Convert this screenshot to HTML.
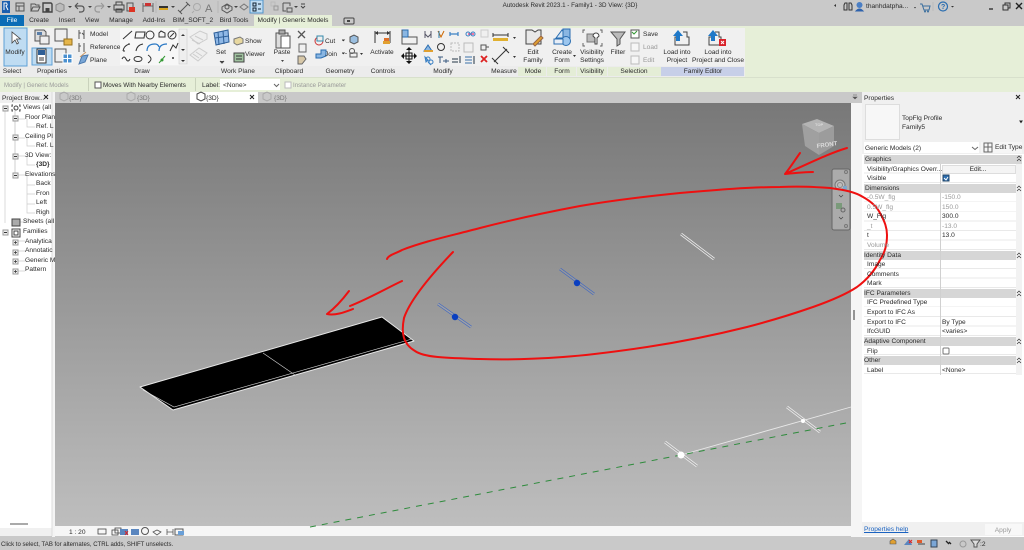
<!DOCTYPE html>
<html><head><meta charset="utf-8"><style>
html,body{margin:0;padding:0}
body{position:relative;width:1024px;height:548px;overflow:hidden;background:#c9c9c9;font-family:"Liberation Sans",sans-serif;font-size:6.6px;color:#2a2a2a}
.t{position:absolute;white-space:nowrap;line-height:10px;height:10px}
.c{transform:translateX(-50%)}
.b{position:absolute}
.g{color:#999}
.w{position:absolute;left:0;top:1px;width:0;height:0}
</style></head><body>
<div class="b" style="left:0;top:26px;width:1024px;height:52px;background:#f0f0f0"></div>
<div class="b" style="left:745px;top:26px;width:279px;height:51px;background:#e6efd8"></div>
<div class="b" style="left:0;top:26px;width:745px;height:2px;background:#e6efd8"></div>
<div class="b" style="left:0;top:66px;width:745px;height:11px;background:#ececec"></div>
<div class="b" style="left:518px;top:67px;width:28px;height:9px;background:#e4edd6"></div>
<div class="b" style="left:547px;top:67px;width:29px;height:9px;background:#e4edd6"></div>
<div class="b" style="left:577px;top:67px;width:30px;height:9px;background:#e4edd6"></div>
<div class="b" style="left:608px;top:67px;width:53px;height:9px;background:#e4edd6"></div>
<div class="b" style="left:661px;top:67px;width:83px;height:9px;background:#c7cfe8"></div>
<div class="b" style="left:0;top:15px;width:24px;height:11px;background:#0b6db6"></div>
<div class="b" style="left:254px;top:15px;width:78px;height:11px;background:#e6efd8"></div>
<div class="b" style="left:0;top:78px;width:1024px;height:14px;background:#e6efd8"></div>
<div class="b" style="left:0;top:77px;width:1024px;height:1px;background:#d8e0cc"></div>
<div class="b" style="left:220px;top:79px;width:60px;height:11px;background:#fff"></div>
<div class="b" style="left:88px;top:78px;width:1px;height:13px;background:#c9d2bc"></div>
<div class="b" style="left:195px;top:78px;width:1px;height:13px;background:#c9d2bc"></div>

<div class="b" style="left:190px;top:92px;width:68px;height:11px;background:#fff"></div>
<div class="b" style="left:0;top:92px;width:52px;height:444px;background:#fff"></div>
<div class="b" style="left:0;top:92px;width:52px;height:11px;background:#f0f0f0"></div>
<div class="b" style="left:0;top:528px;width:52px;height:8px;background:#f0f0f0"></div>
<div class="b" style="left:52px;top:92px;width:3px;height:445px;background:#f4f4f4"></div>
<div class="b" style="left:55px;top:103px;width:796px;height:423px;background:linear-gradient(#787878,#bebebe)"></div>
<div class="b" style="left:851px;top:103px;width:11px;height:434px;background:#f5f5f5"></div>
<div class="b" style="left:55px;top:526px;width:796px;height:10px;background:#f6f6f6"></div>
<div class="b" style="left:862px;top:92px;width:162px;height:445px;background:#fff"></div>
<div class="b" style="left:862px;top:92px;width:162px;height:11px;background:#f0f0f0"></div>
<div class="b" style="left:862px;top:103px;width:162px;height:51px;background:#f0f0f0"></div>
<div class="b" style="left:865px;top:104px;width:35px;height:36px;background:#f7f7f7;border:1px solid #ddd;box-sizing:border-box"></div>
<div class="b" style="left:864px;top:142px;width:115px;height:11px;background:#fff"></div>
<div class="b" style="left:981px;top:142px;width:41px;height:11px;background:#f6f6f6"></div>
<div class="b" style="left:862px;top:522px;width:162px;height:14px;background:#f0f0f0"></div>
<div class="b" style="left:985px;top:524px;width:37px;height:11px;background:#f8f8f8"></div>

<div class="b" style="left:864px;top:164px;width:152px;height:211px;background:repeating-linear-gradient(#fff 0,#fff 8.6px,#e9e9e9 8.6px,#e9e9e9 9.55px)"></div>
<div class="b" style="left:864px;top:155px;width:158px;height:9px;background:#d6d6d6"></div>
<div class="b" style="left:864px;top:184px;width:158px;height:9px;background:#d6d6d6"></div>
<div class="b" style="left:864px;top:251px;width:158px;height:9px;background:#d6d6d6"></div>
<div class="b" style="left:864px;top:289px;width:158px;height:9px;background:#d6d6d6"></div>
<div class="b" style="left:864px;top:337px;width:158px;height:9px;background:#d6d6d6"></div>
<div class="b" style="left:864px;top:356px;width:158px;height:9px;background:#d6d6d6"></div>
<div class="b" style="left:940px;top:164px;width:1px;height:211px;background:#d0d0d0"></div>
<div class="b" style="left:942px;top:165px;width:74px;height:9px;background:#f4f4f4;border:1px solid #ddd;box-sizing:border-box"></div>
<div class="b" style="left:1016px;top:164px;width:6px;height:211px;background:#f2f2f2"></div>

<svg class="b" style="left:0;top:0" width="1024" height="548" viewBox="0 0 1024 548" fill="none">
<!-- QAT -->
<rect x="2" y="1" width="8" height="12" fill="#1c5fae"/><path d="M4 10V3h2.500q1.500 2-.5 3l2 4" stroke="#fff"/>
<rect x="16" y="3" width="8" height="8" stroke="#555"/><path d="M16 6h8M19 6v5" stroke="#555"/>
<path d="M31 11V4h4l1 1h3v2M31 11l2-4h7l-2 4z" stroke="#555"/>
<path d="M43 3h8l1 1v8H43z" stroke="#444" stroke-width="1.400"/><rect x="45.500" y="8" width="4" height="3.500" fill="#444"/>
<path d="M56 5l4-2 4 2v5l-4 2-4-2z" fill="#bbb" stroke="#888"/>
<path d="M75 6h6q3 0 3 3t-3 3h-2M75 6l3-3M75 6l3 3" stroke="#555" stroke-width="1.200"/>
<path d="M104 6h-6q-3 0-3 3t3 3h2M104 6l-3-3M104 6l-3 3" stroke="#999" stroke-width="1.200"/>
<path d="M116 5V2h6v3M114 5h10v5h-10zM116 9h6v3h-6z" stroke="#444"/>
<rect x="127" y="3" width="6" height="8" stroke="#555"/><rect x="129" y="7" width="6" height="5" fill="#d32"/>
<path d="M143 3v9M153 3v9M143 6h10" stroke="#666"/><rect x="145" y="3" width="6" height="3" fill="#c33"/>
<rect x="159" y="6" width="9" height="2" fill="#333"/><rect x="159" y="8" width="9" height="2" fill="#d9a520"/>
<path d="M180 12l8-8M178 10l4 4M186 2l4 4" stroke="#555"/>
<circle cx="197" cy="7" r="3.500" stroke="#aaa"/><path d="M194 11l-2 2" stroke="#aaa"/>
<text x="205" y="12" font-size="11" fill="#777" font-family="Liberation Sans">A</text>
<path d="M222 7l5-3 5 3v3l-5 3-5-3z" stroke="#555"/><circle cx="227" cy="7" r="2" stroke="#555"/>
<path d="M240 7l4-3 4 3-4 3z" stroke="#777"/>
<rect x="250" y="0" width="13" height="13" fill="#bfdcf2" stroke="#4f93c9"/><path d="M253 3h3v3h-3zM253 8h3v3h-3zM258 4h3M258 9h3" stroke="#123"/>
<rect x="271" y="2" width="4" height="4" stroke="#bbb"/><rect x="274" y="6" width="4" height="4" stroke="#999"/>
<path d="M283 3h7v3M283 3v8h3M287 8h5v4h-5z" stroke="#555"/>
<path d="M156 1v12M218 1v12" stroke="#aaa" opacity=".6"/>
<path d="M68 6l2 2 2-2M88 6l2 2 2-2M107 6l2 2 2-2M171 6l2 2 2-2M234 6l2 2 2-2M294 6l2 2 2-2" fill="#444"/>
<path d="M301 4h4M301 6l2 2 2-2" stroke="#444"/>
<rect x="344" y="18" width="10" height="6" rx="1" stroke="#444"/><rect x="347" y="20" width="3" height="2" fill="#444"/>
<!-- right title icons -->
<path d="M836 7l-2-1.500 2-1.500z" fill="#333"/>
<path d="M844 10V5l1-2h2v7zM849 10V3h2l1 2v5z" stroke="#333"/>
<circle cx="859.500" cy="5" r="3" fill="#4a7ec4"/><path d="M856 11q3.500-4 7 0z" fill="#2e62ad" stroke="#2e62ad"/>
<path d="M914 7l2 0-1 1.500z" fill="#333"/>
<path d="M920 4h2l2 6h5l1-4h-7" stroke="#3a6e9e"/><circle cx="925" cy="11.500" r="1" fill="#3a6e9e"/><circle cx="928" cy="11.500" r="1" fill="#3a6e9e"/>
<path d="M933 2v9" stroke="#bbb"/>
<circle cx="943" cy="6.500" r="4.500" stroke="#2a6db0" stroke-width="1.200"/><text x="941" y="9" font-size="7" font-weight="bold" fill="#2a6db0" font-family="Liberation Sans">?</text>
<path d="M951 6l3 0-1.500 1.500z" fill="#333"/>
<path d="M989 9h4" stroke="#333" stroke-width="1.400"/>
<path d="M1003 5h5v5h-5zM1005 5V3h5v5h-2" stroke="#333"/>
<path d="M1016 3l6 6M1022 3l-6 6" stroke="#222" stroke-width="1.400"/>
<!-- Ribbon: Modify button -->
<rect x="4" y="28" width="23" height="38" fill="#bfdcf2" stroke="#5ea0d6"/>
<path d="M12 32v11l3-3 2 4 1.500-1-2-4h4z" fill="#fff" stroke="#444" stroke-width=".8"/>
<!-- Properties -->
<path d="M35 30h9l2 2v4h-6v5h-5z" fill="#ddd" stroke="#555"/><rect x="40" y="36" width="9" height="8" fill="#eee" stroke="#555"/><path d="M37 32h5v3h-5z" fill="#5a7ea8"/>
<rect x="55" y="29" width="12" height="12" fill="#eee" stroke="#555"/><rect x="64" y="39" width="8" height="6" fill="#e6b64a" stroke="#96701e"/>
<rect x="32" y="48" width="20" height="17" fill="#bfdcf2" stroke="#5ea0d6"/><rect x="37" y="49" width="9" height="14" fill="#fff" stroke="#333"/><rect x="38" y="50" width="7" height="5" fill="#2e5f96"/><path d="M39 58h5M39 60h5" stroke="#333"/>
<rect x="55" y="49" width="11" height="13" fill="#eee" stroke="#555"/><rect x="63" y="54" width="9" height="9" fill="#4a90d0" stroke="#fff"/><path d="M67.500 54v9M63 58.500h9" stroke="#fff"/>
<!-- Model/Ref/Plane -->
<path d="M79 30v9M84 30v9M79 33h2M84 35l-2-2" stroke="#555"/>
<path d="M79 43v9M84 43v9M79 46h2" stroke="#555"/>
<path d="M79 64l3-8 6-1-3 7z" fill="#7aa6d6" stroke="#4a78ad"/><path d="M80 57l6-5" stroke="#c96"/>
<!-- Draw gallery -->
<rect x="120" y="28" width="67" height="37" fill="#f7f7f7"/><rect x="179" y="29" width="8" height="35" fill="#eee" stroke="#ccc" stroke-width=".6"/>
<path d="M123 39l9-8" stroke="#333"/><path d="M136 32h9l-1 6h-9z" stroke="#333"/>
<circle cx="150" cy="35" r="4" stroke="#333"/><path d="M161 31l4 2v4h-6v-4z" stroke="#333"/><circle cx="172" cy="35" r="4" stroke="#333"/><path d="M170 37l4-4" stroke="#333"/>
<path d="M123 51q1-6 7-7M125 51h-2M130 44h-2" stroke="#333"/>
<path d="M136 51q1-6 7-7" stroke="#333"/><path d="M147 51q0-7 8-7 3 0 4 3" stroke="#2a78c4" stroke-width="1.200"/><path d="M159 51q0-7 8-7" stroke="#2a78c4" stroke-width="1.200"/><path d="M170 51l3-6 3 3 2-5" stroke="#333"/>
<path d="M122 59q2-4 4 0t4 0" stroke="#333"/><ellipse cx="138" cy="59" rx="4" ry="2.500" stroke="#333"/><path d="M148 55q6 4 0 8" stroke="#333"/><path d="M159 63l6-7" stroke="#393"/><circle cx="162" cy="60" r="1.500" fill="#393"/><circle cx="173" cy="58" r="1" fill="#333"/>
<path d="M181 36l2-2 2 2M181 49l2 2 2-2M181 60l2 2 2-2" fill="#333"/>
<path d="M190 37l10-6 7 3v5l-9 5z" fill="#eee" stroke="#ccc"/><path d="M192 40l8 4M195 36l8 4" stroke="#ccc"/>
<path d="M190 55l9-7 8 5-9 8z" fill="#eee" stroke="#ccc"/><path d="M193 54l6 4M196 52l6 4" stroke="#ccc"/>
<!-- Work plane -->
<path d="M214 33l14-3 1 12-13 3z" fill="#8fb8e6" stroke="#2d5f99"/><path d="M218 32l1 13M223 31l1 13M215 38l14-2" stroke="#2d5f99"/>
<path d="M234 39l6-2 3 2v4l-6 2-3-2z" fill="#e8d8a0" stroke="#777"/><path d="M234 53h10v9h-10z" fill="#9fc29f" stroke="#444"/><path d="M236 56h6M236 59h6" stroke="#333"/>
<path d="M220 61l2 2 2-2" fill="#444" stroke="#444"/>
<!-- Clipboard -->
<path d="M276 33h12v15h-12z" fill="#ddd" stroke="#555"/><rect x="279" y="30" width="6" height="4" fill="#aaa" stroke="#555"/><rect x="281" y="36" width="9" height="12" fill="#fff" stroke="#555"/>
<path d="M298 31l7 7M305 31l-7 7" stroke="#555" stroke-width="1.300"/><rect x="299" y="44" width="7" height="8" stroke="#666"/><path d="M298 56l6 0 2 3-4 5h-4z" fill="#d8c8a8" stroke="#666"/>
<path d="M281 60l3 0-1.500 2z" fill="#444"/>
<!-- Geometry -->
<circle cx="319" cy="41" r="4" stroke="#c33"/><rect x="317" y="36" width="6" height="5" fill="#eee" stroke="#38a"/>
<path d="M316 54h5v-4h5v6l-5 2h-5z" fill="#8ab6e2" stroke="#2a6db0"/>
<path d="M342 40l2 0-1 1M342 53l2 0-1 1" stroke="#333"/>
<path d="M350 37l4-2 4 2v5l-4 2-4-2z" fill="#9bbfe0" stroke="#555"/>
<circle cx="352" cy="51" r="2.500" stroke="#555"/><rect x="350" y="53" width="7" height="4" stroke="#555"/>
<path d="M360 53l3 0-1.500 2zM345 53l2 0-1 1z" fill="#333"/>
<!-- Controls -->
<path d="M375 31v12M390 31v12M375 33h15" stroke="#333"/><path d="M375 33l3-2v4zM390 33l-3-2v4z" fill="#333"/>
<rect x="384" y="38" width="5" height="4" fill="#e0702a"/><rect x="383" y="41" width="7" height="3" fill="#e0a030"/>
<!-- Modify -->
<rect x="402" y="30" width="6" height="7" fill="#8ab6e2" stroke="#2a6db0"/><path d="M402 30v14h15v-7h-9" stroke="#555"/>
<path d="M409 47l-3 3h6zM409 64l-3-3h6zM401 56l3-3v6zM417 56l-3-3v6z" fill="#111"/><path d="M406 53h6v6h-6z" stroke="#111"/><path d="M404 56h11M409 50v11" stroke="#111"/>
<path d="M425 31v7M431 31v7M425 34l3 3 3-3" stroke="#556"/><path d="M438 31l3 6 3-6" stroke="#c60"/><path d="M439 31v7" stroke="#27a"/>
<path d="M450 34h8M450 32v4M458 32v4" stroke="#3a80c4" stroke-width="1.200"/><path d="M468 34h6" stroke="#e05"/><circle cx="468" cy="34" r="2" stroke="#3a80c4"/><circle cx="473" cy="34" r="2" stroke="#3a80c4"/>
<rect x="481" y="30" width="7" height="7" stroke="#ccc"/>
<path d="M424 51l4-6 4 6z" fill="#8ab6e2" stroke="#2a6db0"/><rect x="424" y="50" width="9" height="2" fill="#e0a030"/>
<circle cx="441" cy="47" r="3.500" stroke="#333"/><rect x="451" y="43" width="8" height="8" stroke="#bbb" stroke-dasharray="2 1"/><rect x="464" y="43" width="9" height="9" stroke="#bbb"/><path d="M481 45h5v5h-5zM486 47h3" stroke="#555"/>
<path d="M425 57l3 3-2 2zM428 62l3 3" stroke="#3a80c4"/><circle cx="428" cy="59" r="2" stroke="#3a80c4"/><circle cx="431" cy="62" r="2" stroke="#3a80c4"/>
<path d="M438 57h5M440 57v6M446 59v4M443 61h6" stroke="#3a5a80"/><path d="M452 59h6M452 62h6M460 56v7" stroke="#234"/><path d="M465 57h7M465 60h7M465 63h7" stroke="#3a70a8"/><path d="M474 56v8" stroke="#234"/>
<path d="M481 56l6 6M487 56l-6 6" stroke="#d22" stroke-width="1.800"/>
<!-- Measure -->
<path d="M493 35h15M493 33v4M508 33v4" stroke="#333"/><rect x="493" y="38" width="15" height="3" fill="#e0b030"/>
<path d="M494 62l13-13M492 58l6 6M503 47l6 6" stroke="#333"/>
<path d="M513 37l3 0-1.500 2zM513 56l3 0-1.500 2z" fill="#333"/>
<!-- Edit family -->
<path d="M526 30h6l3 2 3-2h3v14h-15z" fill="#e8e8e8" stroke="#444"/><path d="M533 44l8-8 2 2-8 8z" fill="#e0a030" stroke="#964"/>
<!-- Create form -->
<path d="M556 38l6-8 6 8z" fill="#cfe2f5" stroke="#2a6db0"/><rect x="563" y="29" width="7" height="9" fill="#8ab6e2" stroke="#2a6db0"/><circle cx="566" cy="41" r="4.500" fill="#9cc6ee" stroke="#2a6db0"/><rect x="554" y="39" width="9" height="5" fill="#e8eef7" stroke="#2a6db0"/>
<path d="M573 55l3 0-1.500 2z" fill="#333"/>
<!-- Visibility -->
<path d="M585 30h-2v3M600 30h2v3M585 46h-2v-3M600 46h2v-3" stroke="#666"/><rect x="587" y="34" width="8" height="8" fill="#bbb" stroke="#777"/><path d="M593 36a2 2 0 1 1 6 0l-2 2v6h-2v-6z" fill="#fff" stroke="#444"/>
<!-- Filter -->
<path d="M611 32h14l-5 7v5l-3 2v-7z" fill="#bbb" stroke="#555"/>
<rect x="631" y="30" width="8" height="8" fill="#fff" stroke="#555"/><path d="M632 32l2 2 3-3" stroke="#393"/><rect x="631" y="43" width="8" height="8" fill="#f6f6f6" stroke="#bbb"/><rect x="631" y="56" width="8" height="8" fill="#f6f6f6" stroke="#bbb"/>
<!-- Load -->
<path d="M677 37h-2v8h14v-8h-2v-5h-4" stroke="#444"/><path d="M676 36l-3-0 5-6 5 6h-3v5h-4z" fill="#1e78c8"/>
<path d="M711 37h-2v8h12v-8h-2v-5h-4" stroke="#444"/><path d="M711 36h-3l5-6 5 6h-3v5h-4z" fill="#1e78c8"/><rect x="719" y="39" width="7" height="7" fill="#d9222a"/><path d="M721 41l3 3M724 41l-3 3" stroke="#fff"/>
<!-- Options -->
<rect x="95" y="82" width="6" height="6" fill="#fff" stroke="#555"/>
<rect x="285" y="82" width="6" height="6" fill="#fff" stroke="#bbb"/>
<path d="M274 84l2.500 2.500 2.500-2.500" stroke="#666"/>
<path d="M60 94l4-2 4 2v5l-4 2-4-2z" stroke="#aaa"/><path d="M127 94l4-2 4 2v5l-4 2-4-2z" stroke="#aaa"/><path d="M197 94l4-2 4 2v5l-4 2-4-2z" stroke="#444"/><path d="M263 94l4-2 4 2v5l-4 2-4-2z" stroke="#aaa"/>
<path d="M250 95l4 4M254 95l-4 4" stroke="#222"/>
<path d="M44 95l4 4M48 95l-4 4" stroke="#222"/>
<path d="M1016 95l4 4M1020 95l-4 4" stroke="#222"/>
<path d="M853 95h4M853 97h4l-2 2z" fill="#555" stroke="#555" stroke-width=".6"/>
<path d="M972 147l3 2.500 3-2.500" stroke="#666"/>
<path d="M1020 121l2 0-1 1.500z" fill="#222" stroke="#222"/>
<rect x="984" y="143" width="8" height="9" stroke="#666"/><path d="M984 147h8M988 143v9" stroke="#666"/>
<!-- Browser tree -->
<path d="M15 108v69" stroke="#bbb" stroke-width=".7"/>
<path d="M15 119h10M15 138h10M15 156h10M15 175h10M15 222h11M15 241h10M15 251h10M15 261h10M15 271h10" stroke="#ccc" stroke-width=".7"/>
<path d="M27 119v8h8M27 138v8h8M27 156v9h8M27 175v38h8M27 185h8M27 194h8M27 204h8" stroke="#ccc" stroke-width=".7"/>
<path d="M5 109v114" stroke="#ccc" stroke-width=".7"/>
<rect x="3" y="106" width="5" height="5" fill="#eee" stroke="#999"/><path d="M4 108.500h3" stroke="#333"/>
<rect x="13" y="116" width="5" height="5" fill="#eee" stroke="#999"/><rect x="13" y="135" width="5" height="5" fill="#eee" stroke="#999"/><rect x="13" y="154" width="5" height="5" fill="#eee" stroke="#999"/><rect x="13" y="173" width="5" height="5" fill="#eee" stroke="#999"/>
<path d="M14 118.500h3M14 137.500h3M14 156.500h3M14 175.500h3" stroke="#333"/>
<rect x="3" y="230" width="5" height="5" fill="#eee" stroke="#999"/><path d="M4 232.500h3" stroke="#333"/>
<g fill="#eee" stroke="#999"><rect x="13" y="240" width="5" height="5"/><rect x="13" y="250" width="5" height="5"/><rect x="13" y="259" width="5" height="5"/><rect x="13" y="269" width="5" height="5"/></g>
<path d="M14 242.500h3M15.500 241v3M14 252.500h3M15.500 251v3M14 261.500h3M15.500 260v3M14 271.500h3M15.500 270v3" stroke="#333" stroke-width=".7"/>
<path d="M13 105h-1v2M19 105h1v2M13 111h-1v-2M19 111h1v-2" stroke="#444"/><circle cx="16" cy="108" r="2" stroke="#444"/>
<rect x="12" y="219" width="8" height="7" fill="#aaa" stroke="#444"/>
<path d="M12 229h8v8h-8z" stroke="#444"/><path d="M14 231h4v4h-4z" stroke="#444"/>
<path d="M10 524h18" stroke="#555"/>
<path d="M52 92v444" stroke="#ddd"/>
<!-- View control bar -->
<g stroke="#444" stroke-width=".8"><rect x="98" y="529" width="8" height="5"/><rect x="112" y="530" width="6" height="5"/><rect x="115" y="528" width="6" height="5"/></g>
<rect x="120" y="529" width="8" height="6" fill="#5a86bf"/><path d="M125 531l3 4M128 531l-3 4" stroke="#d22"/>
<rect x="131" y="529" width="8" height="6" fill="#5a86bf"/><circle cx="145" cy="531" r="3.500" stroke="#555"/>
<path d="M153 532l4-2 4 2-4 3zM167 529v6M173 529v6M167 532h6" stroke="#555" stroke-width=".8"/>
<rect x="175" y="529" width="8" height="6" stroke="#555"/><rect x="178" y="531" width="6" height="4" fill="#6aa0d8"/>
<!-- status right icons -->
<path d="M890 541l3-2 3 2v3h-6z" fill="#e0a030" stroke="#555" stroke-width=".6"/>
<path d="M904 545l5-6 3 6z" fill="#5a86bf"/><path d="M909 540l3 3M912 540l-3 3" stroke="#d22"/>
<path d="M917 540h5v3h-5z" fill="#e05a2a"/><path d="M918 544h7" stroke="#444"/>
<rect x="931" y="540" width="6" height="7" fill="#7aa6d6" stroke="#345"/>
<path d="M946 541l3 3M951 544l-2-2" stroke="#222" stroke-width="1.300"/><circle cx="963" cy="544" r="3" stroke="#999"/>
<path d="M971 540h9l-3 4v3h-3v-3z" fill="#ddd" stroke="#555"/>
<path d="M854 310v10" stroke="#333"/>
<!-- property ticks -->
<rect x="943" y="175" width="6" height="6" fill="#2a6db0" stroke="#246"/><path d="M944 178l2 2 2-3" stroke="#fff"/>
<rect x="943" y="348" width="6" height="6" rx="1" fill="#fff" stroke="#777"/>
<path d="M1017 158l2-2 2 2M1017 161l2-2 2 2M1017 188l2-2 2 2M1017 191l2-2 2 2M1017 255l2-2 2 2M1017 258l2-2 2 2M1017 293l2-2 2 2M1017 296l2-2 2 2M1017 341l2-2 2 2M1017 344l2-2 2 2M1017 360l2-2 2 2M1017 363l2-2 2 2" stroke="#333" stroke-width=".7"/>
<!-- cube -->
<path d="M802 124l15-5 17 7-15 7z" fill="#b4b4b4"/><path d="M802 124l17 9v22l-14-9z" fill="#a0a0a0"/><path d="M819 133l15-7v20l-15 9z" fill="#9c9c9c"/>
<text x="815" y="126" font-size="4" fill="#ddd" font-family="Liberation Sans" font-weight="bold">TOP</text>
<text x="817" y="148" font-size="6" fill="#ddd" font-family="Liberation Sans" font-weight="bold" transform="rotate(-8 817 148)">FRONT</text>
<!-- nav bar -->
<rect x="832" y="169" width="18" height="61" rx="2" fill="#ababab" stroke="#666"/>
<circle cx="840" cy="185" r="5" fill="#bdbdbd" stroke="#777"/><circle cx="840" cy="185" r="2.500" stroke="#888"/><rect x="843" y="186" width="4" height="4" fill="#7ea6cc"/>
<rect x="836" y="203" width="6" height="6" fill="#7a9a7a"/><circle cx="843" cy="210" r="2" stroke="#666"/>
<circle cx="846" cy="172" r="1.500" stroke="#777"/><circle cx="846" cy="226" r="1.500" stroke="#777"/>
<path d="M839 195l2 2 2-2M839 217l2 2 2-2" stroke="#444" stroke-width=".7"/>
<!-- slab -->
<path d="M140 387L382 317 414 341 173 410z" fill="#000" stroke="#e8e8e8" stroke-width="1" stroke-linejoin="round"/>
<path d="M143 390L174 407 412 339" stroke="#ddd" stroke-width=".6"/>
<path d="M263 353L295 375" stroke="#ccc" stroke-width=".7"/>
<!-- symbols -->
<g stroke="#3f67c4" stroke-width="2.800"><path d="M438 304l33 23M560 269l34 25"/></g>
<path d="M438 304l33 23" stroke="#a2a2a2" stroke-width="1.400"/><path d="M560 269l34 25" stroke="#989898" stroke-width="1.400"/>
<circle cx="455" cy="317" r="3.200" fill="#0a3fc0"/><circle cx="577" cy="283" r="3.200" fill="#0a3fc0"/>
<path d="M681 234l33 25" stroke="#f2f2f2" stroke-width="2.800"/><path d="M681 234l33 25" stroke="#939393" stroke-width="1.400"/>
<path d="M665 442l32 24M787 407l33 25" stroke="#eee" stroke-width="2.800"/><path d="M665 442l32 24M787 407l33 25" stroke="#aaa" stroke-width="1.400"/>
<path d="M681 455L851 407" stroke="#e8e8e8" stroke-width=".9"/>
<path d="M310 527L851 422" stroke="#2e8b3c" stroke-width="1" stroke-dasharray="6 6"/>
<circle cx="681" cy="455" r="3.500" fill="#fff"/><circle cx="803" cy="421" r="2" fill="#fff"/>
<!-- red annotations -->
<g stroke="#ee1010" stroke-width="2" stroke-linecap="round" stroke-linejoin="round">
<path d="M387 259C388 255 397 253 402 250C425 241 450 236 480 228C515 219 548 212 580 206C615 200 650 196 680 193C715 190 750 187 780 187C800 186 815 187 830 188C845 190 855 192 863 197C872 202 877 207 880 213C885 222 887 228 887 235C887 245 885 252 880 260C875 270 868 279 857 287C845 295 830 301 813 307C790 315 770 321 747 327C715 335 680 342 647 347C620 351 590 355 563 357C535 359 505 360 480 359C450 358 425 358 415 351C403 344 401 333 404 318C410 300 430 276 453 252"/>
<path d="M847 148C830 153 812 162 785 174M800 153C795 160 790 168 785 174C795 173 805 172 813 172"/>
<path d="M402 281C385 289 370 298 350 306M349 291C343 299 335 308 327 314C335 316 345 312 353 309"/>
</g>
</svg>

<!-- Title + tabs -->
<span class="t c" style="left:570px;top:1px;font-size:6.25px">Autodesk Revit 2023.1 - Family1 - 3D View: {3D}</span>
<span class="t" style="left:866px;top:2px">thanhdatpha...</span>
<span class="t c" style="left:12px;top:16px;color:#fff">File</span>
<span class="t c" style="left:39px;top:16px">Create</span>
<span class="t c" style="left:67px;top:16px">Insert</span>
<span class="t c" style="left:92px;top:16px">View</span>
<span class="t c" style="left:121px;top:16px">Manage</span>
<span class="t c" style="left:154px;top:16px">Add-Ins</span>
<span class="t c" style="left:193px;top:16px">BIM_SOFT_2</span>
<span class="t c" style="left:234px;top:16px">Bird Tools</span>
<span class="t c" style="left:293px;top:16px">Modify | Generic Models</span>
<!-- Ribbon text -->
<div class="w">
<span class="t c" style="left:15px;top:47px">Modify</span>
<span class="t" style="left:90px;top:29px">Model</span>
<span class="t" style="left:90px;top:42px">Reference</span>
<span class="t" style="left:90px;top:55px">Plane</span>
<span class="t" style="left:245px;top:36px">Show</span>
<span class="t" style="left:245px;top:49px">Viewer</span>
<span class="t c" style="left:221px;top:47px">Set</span>
<span class="t c" style="left:282px;top:47px">Paste</span>
<span class="t" style="left:325px;top:36px">Cut</span>
<span class="t" style="left:325px;top:49px">Join</span>
<span class="t c" style="left:382px;top:47px">Activate</span>
<span class="t c" style="left:533px;top:47px">Edit</span><span class="t c" style="left:533px;top:55px">Family</span>
<span class="t c" style="left:562px;top:47px">Create</span><span class="t c" style="left:562px;top:55px">Form</span>
<span class="t c" style="left:592px;top:47px">Visibility</span><span class="t c" style="left:592px;top:55px">Settings</span>
<span class="t c" style="left:618px;top:47px">Filter</span>
<span class="t" style="left:643px;top:29px">Save</span>
<span class="t g" style="left:643px;top:42px">Load</span>
<span class="t g" style="left:643px;top:55px">Edit</span>
<span class="t c" style="left:677px;top:47px">Load into</span><span class="t c" style="left:677px;top:55px">Project</span>
<span class="t c" style="left:718px;top:47px">Load into</span><span class="t c" style="left:718px;top:55px">Project and Close</span>
<span class="t c" style="left:12px;top:66px">Select</span>
<span class="t c" style="left:52px;top:66px">Properties</span>
<span class="t c" style="left:142px;top:66px">Draw</span>
<span class="t c" style="left:238px;top:66px">Work Plane</span>
<span class="t c" style="left:289px;top:66px">Clipboard</span>
<span class="t c" style="left:340px;top:66px">Geometry</span>
<span class="t c" style="left:383px;top:66px">Controls</span>
<span class="t c" style="left:443px;top:66px">Modify</span>
<span class="t c" style="left:504px;top:66px">Measure</span>
<span class="t c" style="left:533px;top:66px">Mode</span>
<span class="t c" style="left:562px;top:66px">Form</span>
<span class="t c" style="left:592px;top:66px">Visibility</span>
<span class="t c" style="left:634px;top:66px">Selection</span>
<span class="t c" style="left:703px;top:66px">Family Editor</span>
<!-- Options -->
<span class="t g" style="left:4px;top:80px;font-size:6px">Modify | Generic Models</span>
<span class="t" style="left:103px;top:80px;font-size:6.3px">Moves With Nearby Elements</span>
<span class="t" style="left:202px;top:80px">Label:</span>
<span class="t" style="left:223px;top:80px">&lt;None&gt;</span>
<span class="t g" style="left:293px;top:80px;font-size:6.1px">Instance Parameter</span>
<!-- view tabs -->
<span class="t" style="left:2px;top:93px">Project Brow...</span>
<span class="t" style="left:69px;top:93px;color:#777">{3D}</span>
<span class="t" style="left:137px;top:93px;color:#777">{3D}</span>
<span class="t" style="left:206px;top:93px">{3D}</span>
<span class="t" style="left:274px;top:93px;color:#777">{3D}</span>
</div>
<!-- browser -->
<span class="t" style="left:23px;top:103px">Views (all</span>
<span class="t" style="left:25px;top:113px">Floor Plan</span>
<span class="t" style="left:36px;top:122px">Ref. L</span>
<span class="t" style="left:25px;top:132px">Ceiling Pl</span>
<span class="t" style="left:36px;top:141px">Ref. L</span>
<span class="t" style="left:25px;top:151px">3D View:</span>
<span class="t" style="left:36px;top:160px;font-weight:bold">{3D}</span>
<span class="t" style="left:25px;top:170px">Elevations</span>
<span class="t" style="left:36px;top:179px">Back</span>
<span class="t" style="left:36px;top:189px">Fron</span>
<span class="t" style="left:36px;top:198px">Left</span>
<span class="t" style="left:36px;top:208px">Righ</span>
<span class="t" style="left:23px;top:217px">Sheets (all</span>
<span class="t" style="left:23px;top:227px">Families</span>
<span class="t" style="left:25px;top:237px">Analytica</span>
<span class="t" style="left:25px;top:246px">Annotatic</span>
<span class="t" style="left:25px;top:256px">Generic M</span>
<span class="t" style="left:25px;top:265px">Pattern</span>
<!-- properties -->
<div class="w">
<span class="t" style="left:864px;top:93px">Properties</span>
<span class="t" style="left:902px;top:113px">TopFlg Profile</span>
<span class="t" style="left:902px;top:122px">Family5</span>
<span class="t" style="left:865px;top:143px">Generic Models (2)</span>
<span class="t" style="left:995px;top:142px">Edit Type</span>
<span class="t" style="left:865px;top:154px">Graphics</span>
<span class="t" style="left:867px;top:164px">Visibility/Graphics Overr...</span>
<span class="t c" style="left:978px;top:164px">Edit...</span>
<span class="t" style="left:867px;top:173px">Visible</span>
<span class="t" style="left:865px;top:183px">Dimensions</span>
<span class="t g" style="left:867px;top:192px">-0.5W_flg</span><span class="t g" style="left:942px;top:192px">-150.0</span>
<span class="t g" style="left:867px;top:202px">0.5W_flg</span><span class="t g" style="left:942px;top:202px">150.0</span>
<span class="t" style="left:867px;top:211px">W_Flg</span><span class="t" style="left:942px;top:211px">300.0</span>
<span class="t g" style="left:867px;top:221px">_t</span><span class="t g" style="left:942px;top:221px">-13.0</span>
<span class="t" style="left:867px;top:230px">t</span><span class="t" style="left:942px;top:230px">13.0</span>
<span class="t g" style="left:867px;top:240px">Volume</span>
<span class="t" style="left:864px;top:250px">Identity Data</span>
<span class="t" style="left:867px;top:259px">Image</span>
<span class="t" style="left:867px;top:269px">Comments</span>
<span class="t" style="left:867px;top:278px">Mark</span>
<span class="t" style="left:864px;top:288px">IFC Parameters</span>
<span class="t" style="left:867px;top:297px">IFC Predefined Type</span>
<span class="t" style="left:867px;top:307px">Export to IFC As</span>
<span class="t" style="left:867px;top:317px">Export to IFC</span><span class="t" style="left:942px;top:317px">By Type</span>
<span class="t" style="left:867px;top:326px">IfcGUID</span><span class="t" style="left:942px;top:326px">&lt;varies&gt;</span>
<span class="t" style="left:864px;top:336px">Adaptive Component</span>
<span class="t" style="left:867px;top:346px">Flip</span>
<span class="t" style="left:864px;top:355px">Other</span>
<span class="t" style="left:867px;top:365px">Label</span><span class="t" style="left:942px;top:365px">&lt;None&gt;</span>
<span class="t" style="left:864px;top:524px;color:#1a62c0;text-decoration:underline">Properties help</span>
<span class="t c g" style="left:1003px;top:525px">Apply</span>
<span class="t" style="left:69px;top:527px">1 : 20</span>
<span class="t" style="left:1px;top:539px;font-size:6.05px">Click to select, TAB for alternates, CTRL adds, SHIFT unselects.</span>
<span class="t" style="left:980px;top:539px">:2</span>
</div>
</body></html>
